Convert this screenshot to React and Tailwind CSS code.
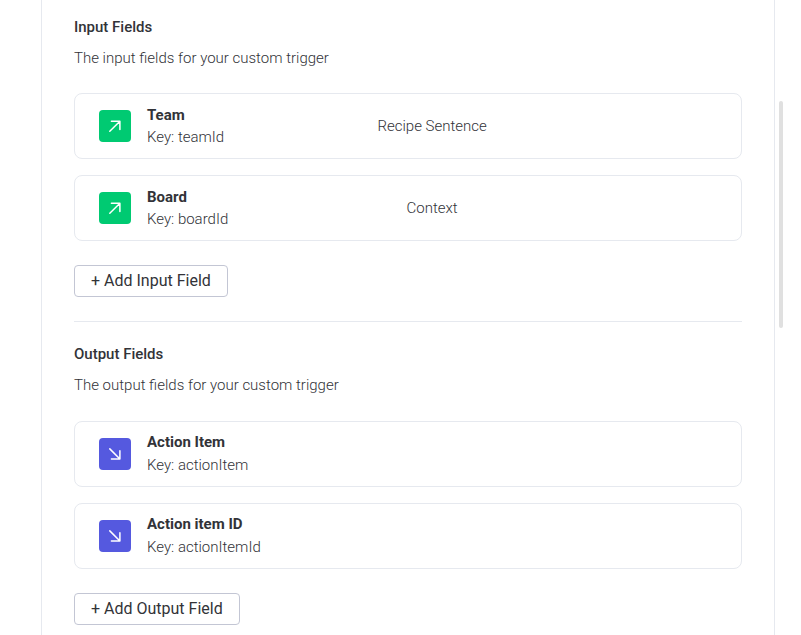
import React from 'react';

const inputFields = [
  { name: 'Team', fieldKey: 'teamId', type: 'Recipe Sentence' },
  { name: 'Board', fieldKey: 'boardId', type: 'Context' }
];

const outputFields = [
  { name: 'Action Item', fieldKey: 'actionItem' },
  { name: 'Action item ID', fieldKey: 'actionItemId' }
];

const ArrowUpRight = () => (
  <svg width="32" height="32" viewBox="0 0 32 32" fill="none" stroke="white" strokeWidth="1.5" strokeLinecap="round" strokeLinejoin="round">
    <path d="M10.8 21.2L20.9 11.2M12.4 11.2H20.9V19.4" />
  </svg>
);

const ArrowDownRight = () => (
  <svg width="32" height="32" viewBox="0 0 32 32" fill="none" stroke="white" strokeWidth="1.5" strokeLinecap="round" strokeLinejoin="round">
    <path d="M10.8 10.9L20.9 21M12.4 21H20.9V12.8" />
  </svg>
);

const FieldRow = ({ field, output }) => (
  <div className="flex h-[66px] items-center rounded-lg border border-[#e6e9ef] pl-6">
    <div className={output ? 'h-8 w-8 rounded bg-[#5559df]' : 'h-8 w-8 rounded bg-[#00ca72]'}>
      {output ? <ArrowDownRight /> : <ArrowUpRight />}
    </div>
    <div className="ml-4 w-[188.6px]">
      <p className="text-[15px] leading-[22.3px] font-bold">{field.name}</p>
      <p className="text-[15px] leading-[22.3px] font-light">Key: {field.fieldKey}</p>
    </div>
    <p className="w-[193px] text-center text-[15px] font-light">{field.type}</p>
  </div>
);

const Section = ({ title, description, fields, button, output }) => (
  <section>
    <h2 className="text-[15px] leading-6 font-medium">{title}</h2>
    <p className="mt-[7px] text-[15px] leading-6 font-light">{description}</p>
    <div className="mt-[23.3px] flex flex-col gap-4">
      {fields.map(field => (
        <FieldRow key={field.fieldKey} field={field} output={output} />
      ))}
    </div>
    <button className="mt-6 h-8 rounded border border-[#c3c6d4] px-4 text-base leading-[30px]">{button}</button>
  </section>
);

const App = () => {
  return (
    <div className="flex h-[635px] overflow-hidden bg-white font-['Roboto',sans-serif] text-[#323338]">
      <div className="ml-[41px] w-[734px] border-x border-[#e6e9ef] px-8 pt-[15px]">
        <Section title="Input Fields" description="The input fields for your custom trigger" fields={inputFields} button="+ Add Input Field" />
        <hr className="mt-6 mb-5 border-[#e6e9ef]" />
        <Section title="Output Fields" description="The output fields for your custom trigger" fields={outputFields} button="+ Add Output Field" output />
      </div>
      {/* Scrollbar thumb */}
      <div className="mt-[101px] ml-1 h-[227px] w-1 rounded-sm bg-[#e0e0e0]" />
    </div>
  );
};

export default App;
